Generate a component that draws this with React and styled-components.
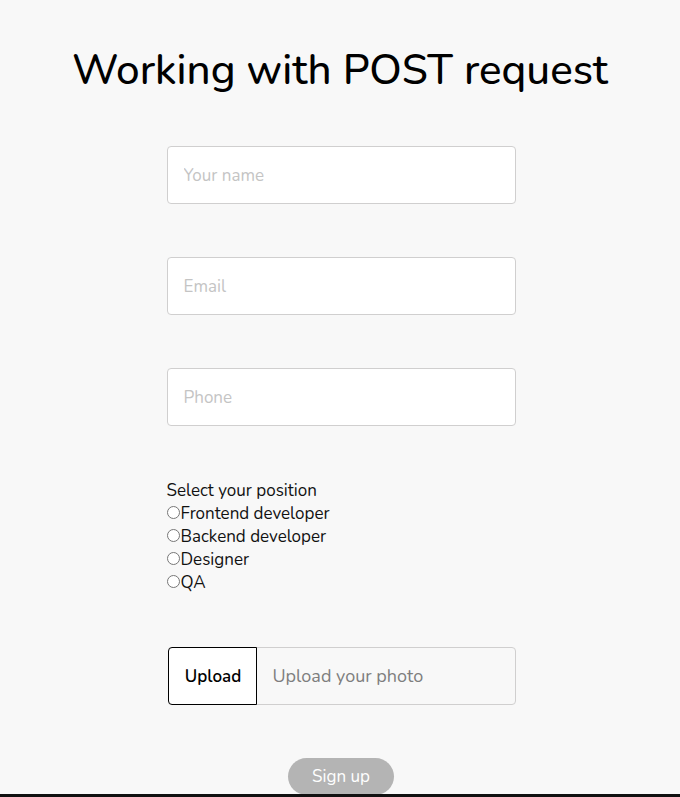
import React from "react";
import styled, { createGlobalStyle } from "styled-components";

const GlobalStyle = createGlobalStyle`
  body {
    margin: 0;
    background-color: #f8f8f8;
    font-family: "Nunito", "Noto Sans", sans-serif;
    color: rgba(0, 0, 0, 0.87);
  }
`;

const Page = styled.div`
  min-height: 797px;
  display: flex;
  flex-direction: column;
`;

const Title = styled.h1`
  margin: 0;
  padding-top: 40px;
  font-size: 42.2px;
  font-weight: 500;
  line-height: 60px;
  text-align: center;
  color: #000;
`;

const Form = styled.form`
  width: 349px;
  margin: 46px auto 0;
  padding-left: 2px;
  display: flex;
  flex-direction: column;
  gap: 53px;
`;

const Input = styled.input`
  box-sizing: border-box;
  width: 100%;
  height: 58px;
  padding: 0 16px;
  border: 1px solid #d0cfcf;
  border-radius: 4px;
  background: #fff;
  font-family: inherit;
  font-size: 17px;
  outline: none;

  &::placeholder {
    color: #c4c4c4;
  }
`;

const Fieldset = styled.div`
  display: flex;
  flex-direction: column;
  font-size: 17px;
  line-height: 23px;
  color: #111;
`;

const RadioLabel = styled.label`
  display: flex;
  align-items: center;
`;

const Radio = styled.input`
  margin: -3px 1px 0 0;
  width: 13px;
  height: 13px;
`;

const UploadBox = styled.div`
  box-sizing: border-box;
  height: 58px;
  margin: 0 0 0 1px;
  display: flex;
  border: 1px solid #d0cfcf;
  border-radius: 4px;
`;

const UploadButton = styled.label`
  box-sizing: border-box;
  width: 89px;
  margin: -1px 0 -1px -1px;
  padding-left: 2px;
  display: flex;
  align-items: center;
  justify-content: center;
  border: 1px solid #000;
  border-radius: 4px 0 0 4px;
  background: #fff;
  font-size: 17px;
  font-weight: 600;
  color: #000;
`;

const UploadText = styled.span`
  display: flex;
  align-items: center;
  padding-left: 16px;
  font-size: 18px;
  color: #7e7e7e;
`;

const SignUp = styled.button`
  align-self: center;
  margin: 0;
  width: 106px;
  height: 37px;
  border: none;
  border-radius: 20px;
  background: #b4b4b4;
  color: #fff;
  font-family: inherit;
  font-size: 17px;
`;

const Footer = styled.footer`
  height: 3px;
  margin-top: -1px;
  background: #111;
`;

const positions = ["Frontend developer", "Backend developer", "Designer", "QA"];

export default function App() {
  return (
    <>
      <GlobalStyle />
      <Page>
        <Title>Working with POST request</Title>
        <Form onSubmit={(e) => e.preventDefault()}>
          <Input placeholder="Your name" />
          <Input placeholder="Email" />
          <Input placeholder="Phone" />
          <Fieldset>
            <span>Select your position</span>
            {positions.map((p) => (
              <RadioLabel key={p}>
                <Radio type="radio" name="position" />
                {p}
              </RadioLabel>
            ))}
          </Fieldset>
          <UploadBox>
            <UploadButton>Upload</UploadButton>
            <UploadText>Upload your photo</UploadText>
          </UploadBox>
          <SignUp type="submit" disabled>
            Sign up
          </SignUp>
        </Form>
        <Footer />
      </Page>
    </>
  );
}
